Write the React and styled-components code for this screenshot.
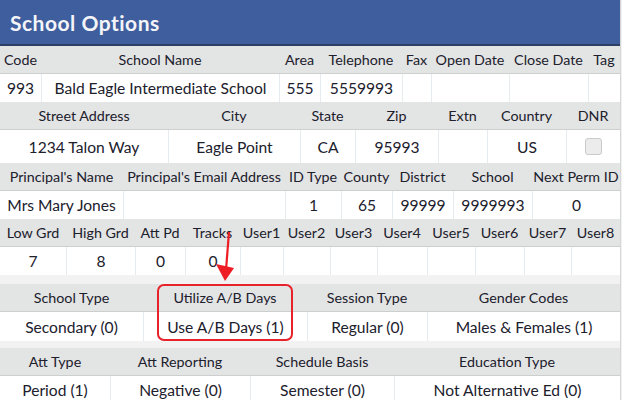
import React from "react";
import styled, { createGlobalStyle } from "styled-components";

const GlobalStyle = createGlobalStyle`
  html, body {
    margin: 0;
    padding: 0;
    background: #f2f2f2;
  }
  body {
    font-family: "Lato", "Liberation Sans", sans-serif;
    color: #20202c;
  }
`;

const tables = [
  {
    cols: [41, 238, 41, 82, 29, 78, 79, 32],
    heads: ["Code", "School Name", "Area", "Telephone", "Fax", "Open Date", "Close Date", "Tag"],
    cells: ["993", "Bald Eagle Intermediate School", "555", "5559993", "", "", "", ""],
    rowH: 28,
  },
  {
    cols: [168, 132, 55, 83, 49, 79, 54],
    heads: ["Street Address", "City", "State", "Zip", "Extn", "Country", "DNR"],
    cells: ["1234 Talon Way", "Eagle Point", "CA", "95993", "", "US", "checkbox"],
    rowH: 33,
  },
  {
    cols: [123, 162, 56, 51, 61, 79, 88],
    heads: ["Principal's Name", "Principal's Email Address", "ID Type", "County", "District", "School", "Next Perm ID"],
    cells: ["Mrs Mary Jones", "", "1", "65", "99999", "9999993", "0"],
    rowH: 28,
  },
  {
    cols: [66, 69, 50, 55, 43, 47, 47, 50, 48, 49, 47, 49],
    heads: ["Low Grd", "High Grd", "Att Pd", "Tracks", "User1", "User2", "User3", "User4", "User5", "User6", "User7", "User8"],
    cells: ["7", "8", "0", "0", "", "", "", "", "", "", "", ""],
    rowH: 28,
  },
  {
    cols: [143, 164, 120, 193],
    heads: ["School Type", "Utilize A/B Days", "Session Type", "Gender Codes"],
    cells: ["Secondary (0)", "Use A/B Days (1)", "Regular (0)", "Males & Females (1)"],
    rowH: 29,
    gap: 9,
  },
  {
    cols: [110, 140, 144, 226],
    heads: ["Att Type", "Att Reporting", "Schedule Basis", "Education Type"],
    cells: ["Period (1)", "Negative (0)", "Semester (0)", "Not Alternative Ed (0)"],
    rowH: 28,
    gap: 7,
  },
];

const Page = styled.div`
  position: relative;
  width: 620px;
  height: 400px;
  overflow: hidden;
  border-right: 1px solid #d6d6d6;
`;

const TitleBar = styled.header`
  height: 44px;
  background: #3f5e9e;
  border-bottom: 2px solid #2e3f63;
  display: flex;
  align-items: center;
  padding: 0 10px;
  h1 {
    margin: 0;
    font-size: 21px;
    font-weight: 700;
    color: #f4f5f8;
    letter-spacing: 0.5px;
  }
`;

const Table = styled.div`
  display: grid;
  grid-template-columns: ${(p) => p.$cols.map((c) => `${c}px`).join(" ")};
  margin-top: ${(p) => p.$gap || 0}px;
  background: #fff;
`;

const HeadCell = styled.div`
  height: 27px;
  background: #e3e4e4;
  border-bottom: 1px solid #cdcfcf;
  display: flex;
  align-items: center;
  justify-content: center;
  font-size: 14.3px;
  white-space: nowrap;
`;

const DataCell = styled.div`
  height: ${(p) => p.$h}px;
  display: flex;
  align-items: center;
  justify-content: center;
  font-size: 15.6px;
  white-space: nowrap;
  border-left: 1px solid #e6ebef;
  &:nth-child(${(p) => p.$first}) {
    border-left: none;
  }
`;

const Check = styled.span`
  width: 15px;
  height: 15px;
  background: #ececec;
  border: 1px solid #cacaca;
  border-radius: 3px;
`;

const Highlight = styled.div`
  position: absolute;
  left: 157px;
  top: 284px;
  width: 132px;
  height: 53px;
  border: 2px solid #e8222a;
  border-radius: 7px;
  pointer-events: none;
`;

const Arrow = styled.svg`
  position: absolute;
  left: 210px;
  top: 228px;
  pointer-events: none;
`;

export default function App() {
  return (
    <>
      <GlobalStyle />
      <Page>
        <TitleBar>
          <h1>School Options</h1>
        </TitleBar>
        {tables.map((t, i) => (
          <Table key={i} $cols={t.cols} $gap={t.gap}>
            {t.heads.map((h) => (
              <HeadCell key={h}>{h}</HeadCell>
            ))}
            {t.cells.map((c, j) => (
              <DataCell key={j} $h={t.rowH} $first={t.heads.length + 1}>
                {c === "checkbox" ? <Check /> : c}
              </DataCell>
            ))}
          </Table>
        ))}
        <Highlight />
        <Arrow width="30" height="56" viewBox="0 0 30 56">
          <line x1="19" y1="4" x2="16" y2="42" stroke="#ee1c24" strokeWidth="2.2" />
          <polygon points="6,36 24,40 15,53" fill="#ee1c24" />
        </Arrow>
      </Page>
    </>
  );
}
